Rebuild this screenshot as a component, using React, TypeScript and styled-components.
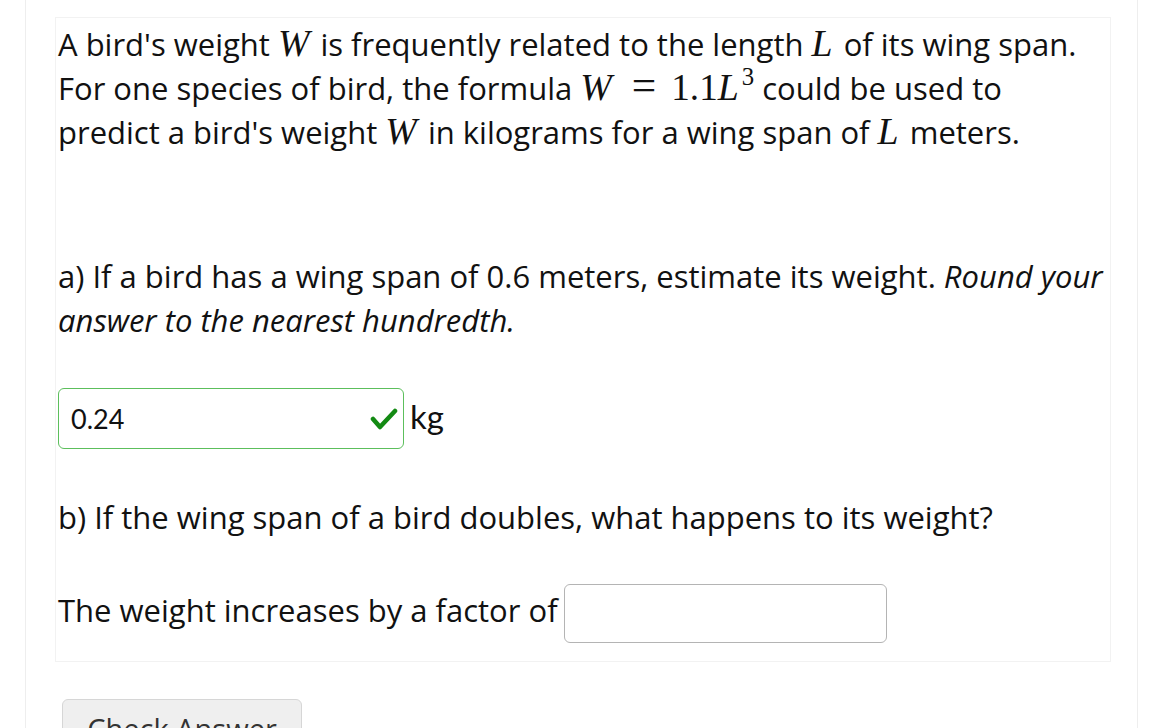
import styled, { createGlobalStyle } from 'styled-components';

const GlobalStyle = createGlobalStyle`
  html, body {
    margin: 0;
    padding: 0;
    background: #fff;
  }
  body {
    font-family: "Open Sans", "Noto Sans", sans-serif;
    color: #111;
  }
`;

const Page = styled.div`
  margin: 0 26px 0 25px;
  border-left: 1px solid #eeeeee;
  border-right: 1px solid #eeeeee;
  padding: 17px 26px 0 29px;
  box-sizing: border-box;
  overflow: hidden;
  height: 728px;
`;

const Question = styled.div`
  border: 1px solid #f2f2f2;
  padding: 4px 2px 0 2px;
  height: 645px;
  box-sizing: border-box;
  font-size: 31px;
  line-height: 44px;
`;

const Para = styled.p<{ $top?: number }>`
  margin: ${(p) => p.$top ?? 0}px 0 0 0;
`;

const Var = styled.span`
  font-family: "Liberation Serif", "DejaVu Serif", serif;
  font-style: italic;
  font-size: 1.22em;
  line-height: 0;
  margin-right: 3px;
`;

const Num = styled.span`
  font-family: "Liberation Serif", "DejaVu Serif", serif;
  font-size: 1.2em;
  line-height: 0;
`;

const Eq = styled.span`
  font-family: "Liberation Serif", "DejaVu Serif", serif;
  font-size: 1.4em;
  line-height: 0;
  margin: 0 15px 0 17px;
`;

const Sup = styled.sup`
  font-family: "Liberation Serif", "DejaVu Serif", serif;
  font-size: 0.8em;
  line-height: 0;
  vertical-align: 0.62em;
`;

const Hint = styled.em`
  font-style: italic;
`;

const AnswerRow = styled.div<{ $top: number }>`
  display: flex;
  align-items: center;
  margin-top: ${(p) => p.$top}px;
`;

const Field = styled.div<{ $state: 'correct' | 'empty'; $w: number; $h: number }>`
  position: relative;
  width: ${(p) => p.$w}px;
  height: ${(p) => p.$h}px;
  box-sizing: border-box;
  border: 1.5px solid ${(p) => (p.$state === 'correct' ? '#5cbf5c' : '#b4b4b4')};
  border-radius: 6px;
  background: #fff;
  display: flex;
  align-items: center;
  padding: 0 12px;
  font-family: "Lato", "Liberation Sans", sans-serif;
  font-size: 27px;
  color: #111;
`;

const Check = styled.svg`
  position: absolute;
  right: 5px;
  top: 50%;
  transform: translateY(-50%);
`;

const Unit = styled.span`
  font-family: "Lato", "Liberation Sans", sans-serif;
  font-size: 33px;
  margin-left: 6px;
  margin-top: -6px;
`;

const Lead = styled.span`
  margin-right: 6px;
  margin-top: -8px;
`;

const Footer = styled.div`
  padding: 37px 0 0 7px;
`;

const Button = styled.button`
  width: 240px;
  height: 50px;
  border: 1px solid #d6d6d6;
  border-radius: 6px;
  background: #efefef;
  font-family: "Open Sans", "Noto Sans", sans-serif;
  font-size: 29px;
  color: #333;
  padding: 6px 0 0;
  text-align: center;
  vertical-align: top;
  line-height: 1.6;
`;

export default function App() {
  return (
    <>
      <GlobalStyle />
      <Page>
        <Question>
          <Para>
            A bird's weight <Var>W</Var> is frequently related to the length <Var>L</Var> of its wing span.
            <br />
            For one species of bird, the formula <Var>W</Var>
            <Eq>=</Eq>
            <Num>1.1</Num>
            <Var>L</Var>
            <Sup>3</Sup> could be used to
            <br />
            predict a bird's weight <Var>W</Var> in kilograms for a wing span of <Var>L</Var> meters.
          </Para>

          <Para $top={100}>
            a) If a bird has a wing span of 0.6 meters, estimate its weight.{' '}
            <Hint>Round your answer to the nearest hundredth.</Hint>
          </Para>

          <AnswerRow $top={46}>
            <Field $state="correct" $w={346} $h={61}>
              0.24
              <Check width="28" height="24" viewBox="0 0 28 24">
                <polyline
                  points="3,12 10,20 25,4"
                  fill="none"
                  stroke="#138a13"
                  strokeWidth="4.5"
                  strokeLinecap="round"
                  strokeLinejoin="round"
                />
              </Check>
            </Field>
            <Unit>kg</Unit>
          </AnswerRow>

          <Para $top={46}>b) If the wing span of a bird doubles, what happens to its weight?</Para>

          <AnswerRow $top={45}>
            <Lead>The weight increases by a factor of</Lead>
            <Field $state="empty" $w={323} $h={59} />
          </AnswerRow>
        </Question>
        <Footer>
          <Button>Check Answer</Button>
        </Footer>
      </Page>
    </>
  );
}
